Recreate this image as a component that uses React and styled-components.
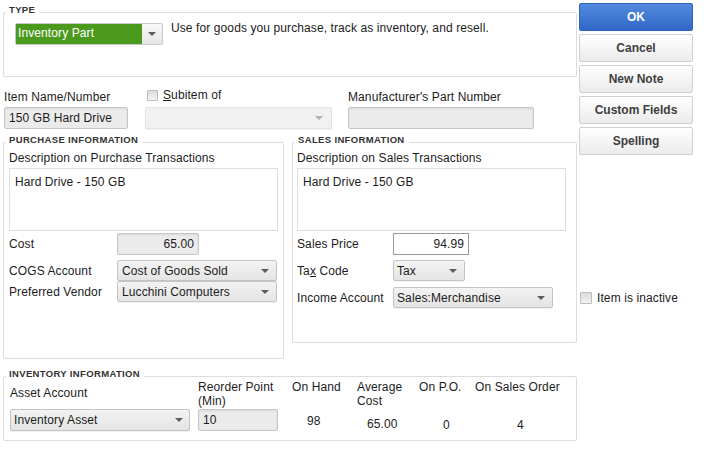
import styled, { createGlobalStyle } from 'styled-components';

const GlobalStyle = createGlobalStyle`
  * {
    box-sizing: border-box;
  }

  body {
    margin: 0;
    background: #ffffff;
    font-family: "Liberation Sans", Arial, sans-serif;
    font-size: 12px;
    line-height: 14px;
    letter-spacing: 0.1px;
    color: #1c1c1c;
  }
`;

// Layout
const Window = styled.div`
  display: flex;
  align-items: flex-start;
  width: 711px;
  height: 459px;
  padding-left: 3px;
  overflow: hidden;
`;

const Main = styled.div`
  display: flex;
  flex-direction: column;
  flex-shrink: 0;
  width: 574px;
`;

const Side = styled.div`
  display: flex;
  flex-direction: column;
  gap: 3px;
  width: 114px;
  margin-left: 2px;
  padding-top: 3px;
`;

// Group boxes
const Group = styled.section`
  position: relative;
  flex-shrink: 0;
  width: ${(p) => p.$w}px;
  height: ${(p) => p.$h}px;
  margin-top: ${(p) => p.$mt || 0}px;
  padding: ${(p) => p.$pad};
  border: 1px solid #dcdcdc;
  border-radius: 2px;
`;

const GroupTitle = styled.span`
  position: absolute;
  top: -8px;
  left: 2px;
  padding: 0 4px 0 3px;
  background: #ffffff;
  font-size: 9.5px;
  line-height: 10px;
  font-weight: bold;
  letter-spacing: 0.35px;
  color: #333333;
`;

// Type
const TypeRow = styled.div`
  display: flex;
  align-items: flex-start;
  gap: 8px;
`;

const TypeSelect = styled.div`
  display: flex;
  width: 148px;
  height: 22px;
  border: 1px solid #c9c9c9;
  border-radius: 2px;
  background: linear-gradient(#f8f8f8, #e6e6e6);
`;

const TypeValue = styled.span`
  flex: 1;
  padding-left: 2px;
  background: #4b9a1d;
  color: #ffffff;
  line-height: 18px;
`;

const TypeArrowBox = styled.span`
  display: flex;
  align-items: center;
  justify-content: center;
  width: 20px;
`;

const TypeHint = styled.span`
  margin-top: -2px;
`;

// Item row
const ItemRow = styled.div`
  display: flex;
  padding: 13px 0 0 1px;
`;

const Field = styled.div`
  display: flex;
  flex-direction: column;
  gap: 3px;
  width: ${(p) => p.$w}px;
  margin-right: ${(p) => p.$mr || 0}px;
`;

const FieldLabel = styled.label`
  display: flex;
  align-items: flex-start;
  gap: 5px;
  height: 14px;
  padding-left: ${(p) => p.$pl || 0}px;
  white-space: nowrap;
`;

const RaisedText = styled.span`
  line-height: 10px;
`;

const Check = styled.span`
  flex-shrink: 0;
  width: ${(p) => p.$size || 11}px;
  height: ${(p) => p.$size || 11}px;
  border: 1px solid #bcbcbc;
  border-radius: 1px;
  background: linear-gradient(#dcdcdc, #f3f3f3);
`;

const TextBox = styled.input`
  display: block;
  width: ${(p) => (p.$w ? `${p.$w}px` : '100%')};
  height: ${(p) => p.$h || 22}px;
  margin: 0;
  padding: 0 4px;
  border: 1px solid #c6c6c6;
  border-radius: 2px;
  background: #ebebeb;
  box-shadow: inset 0 1px 2px rgba(0, 0, 0, 0.08);
  font: inherit;
  letter-spacing: inherit;
  color: #1c1c1c;
  text-align: ${(p) => (p.$right ? 'right' : 'left')};
  outline: none;
`;

const PriceBox = styled(TextBox)`
  border-color: #9a9a9a;
  border-radius: 0;
  background: #ffffff;
  box-shadow: none;
`;

const Combo = styled.div`
  display: flex;
  align-items: center;
  justify-content: space-between;
  flex-shrink: 0;
  width: ${(p) => (p.$w ? `${p.$w}px` : '100%')};
  height: ${(p) => p.$h || 21}px;
  padding: 0 ${(p) => p.$pr ?? 7}px 0 ${(p) => p.$pl ?? 4}px;
  border: 1px solid ${(p) => (p.$disabled ? '#e2e2e2' : '#c4c4c4')};
  border-radius: 2px;
  background: ${(p) =>
    p.$disabled ? '#f1f1f1' : 'linear-gradient(#f3f3f3, #e4e4e4)'};
  box-shadow: 0 1px 1px rgba(0, 0, 0, 0.06);
  white-space: nowrap;
`;

const Arrow = styled.span`
  width: 0;
  height: 0;
  border-left: 4px solid transparent;
  border-right: 4px solid transparent;
  border-top: 4px solid ${(p) => (p.$light ? '#b0b0b0' : '#5c5c5c')};
`;

// Purchase / sales
const InfoRow = styled.div`
  display: flex;
  align-items: flex-start;
  gap: 8px;
  margin-top: 13px;
`;

const Memo = styled.textarea`
  display: block;
  width: 269px;
  height: 63px;
  margin: 3px 0 0;
  padding: 6px 5px;
  border: 1px solid #dedede;
  background: #ffffff;
  resize: none;
  font: inherit;
  letter-spacing: inherit;
  color: inherit;
  outline: none;
  overflow: hidden;
`;

const FormRow = styled.div`
  display: flex;
  align-items: center;
  margin-top: ${(p) => p.$mt || 0}px;
`;

const RowLabel = styled.span`
  flex-shrink: 0;
  width: ${(p) => p.$w}px;
  white-space: nowrap;
`;

// Inventory
const InvGrid = styled.div`
  display: grid;
  grid-template-columns: 188px 94px 65px 62px 56px 1fr;
  grid-template-rows: 28px 22px;
  row-gap: 1px;
`;

const InvHead = styled.div`
  padding-top: ${(p) => p.$pt || 0}px;
  white-space: nowrap;
`;

const InvValue = styled.div`
  padding: ${(p) => p.$pt}px 0 0 ${(p) => p.$pl}px;
`;

// Side buttons
const Button = styled.button`
  width: 114px;
  height: 28px;
  padding: 0;
  border: 1px solid #d0d0d0;
  border-radius: 2px;
  background: linear-gradient(#ffffff, #ebebeb);
  font: bold 12px "Liberation Sans", Arial, sans-serif;
  color: #3e3e3e;
  cursor: pointer;
`;

const PrimaryButton = styled(Button)`
  border-color: #2f62bd;
  background: linear-gradient(#538ade, #3168c8);
  color: #ffffff;
`;

const InactiveRow = styled.label`
  display: flex;
  align-items: center;
  gap: 5px;
  height: 14px;
  margin-top: 133px;
  padding-left: 1px;
`;

export default function App() {
  return (
    <>
      <GlobalStyle />
      <Window>
        <Main>
          <Group $w={574} $h={65} $mt={12} $pad="10px 0 0 11px">
            <GroupTitle>TYPE</GroupTitle>
            <TypeRow>
              <TypeSelect>
                <TypeValue>Inventory Part</TypeValue>
                <TypeArrowBox>
                  <Arrow />
                </TypeArrowBox>
              </TypeSelect>
              <TypeHint>Use for goods you purchase, track as inventory, and resell.</TypeHint>
            </TypeRow>
          </Group>

          <ItemRow>
            <Field $w={124} $mr={17}>
              <FieldLabel>Item Name/Number</FieldLabel>
              <TextBox readOnly value="150 GB Hard Drive" />
            </Field>
            <Field $w={187} $mr={16}>
              <FieldLabel $pl={2}>
                <Check />
                <RaisedText>
                  <u>S</u>ubitem of
                </RaisedText>
              </FieldLabel>
              <Combo $h={22} $pr={8} $disabled>
                <span />
                <Arrow $light />
              </Combo>
            </Field>
            <Field $w={186}>
              <FieldLabel>Manufacturer's Part Number</FieldLabel>
              <TextBox readOnly value="" />
            </Field>
          </ItemRow>

          <InfoRow>
            <Group $w={281} $h={217} $pad="8px 5px 0">
              <GroupTitle>PURCHASE INFORMATION</GroupTitle>
              <div>Description on Purchase Transactions</div>
              <Memo readOnly defaultValue="Hard Drive - 150 GB" />
              <FormRow $mt={2}>
                <RowLabel $w={108}>Cost</RowLabel>
                <TextBox $w={82} $right readOnly value="65.00" />
              </FormRow>
              <FormRow $mt={5}>
                <RowLabel $w={108}>COGS Account</RowLabel>
                <Combo $w={160}>
                  <span>Cost of Goods Sold</span>
                  <Arrow />
                </Combo>
              </FormRow>
              <FormRow>
                <RowLabel $w={108}>Preferred Vendor</RowLabel>
                <Combo $w={160}>
                  <span>Lucchini Computers</span>
                  <Arrow />
                </Combo>
              </FormRow>
            </Group>

            <Group $w={285} $h={201} $pad="8px 4px 0">
              <GroupTitle>SALES INFORMATION</GroupTitle>
              <div>Description on Sales Transactions</div>
              <Memo readOnly defaultValue="Hard Drive - 150 GB" />
              <FormRow $mt={2}>
                <RowLabel $w={96}>Sales Price</RowLabel>
                <PriceBox $w={76} $right readOnly value="94.99" />
              </FormRow>
              <FormRow $mt={5}>
                <RowLabel $w={96}>
                  Ta<u>x</u> Code
                </RowLabel>
                <Combo $w={72} $pl={3}>
                  <span>Tax</span>
                  <Arrow />
                </Combo>
              </FormRow>
              <FormRow $mt={6}>
                <RowLabel $w={96}>Income Account</RowLabel>
                <Combo $w={160} $pl={3}>
                  <span>Sales:Merchandise</span>
                  <Arrow />
                </Combo>
              </FormRow>
            </Group>
          </InfoRow>

          <Group $w={574} $h={65} $mt={17} $pad="3px 0 0 6px">
            <GroupTitle>INVENTORY INFORMATION</GroupTitle>
            <InvGrid>
              <InvHead $pt={6}>Asset Account</InvHead>
              <InvHead>
                Reorder Point
                <br />
                (Min)
              </InvHead>
              <InvHead>On Hand</InvHead>
              <InvHead>
                Average
                <br />
                Cost
              </InvHead>
              <InvHead>On P.O.</InvHead>
              <InvHead>On Sales Order</InvHead>

              <Combo $w={180} $h={22} $pl={3} $pr={6}>
                <span>Inventory Asset</span>
                <Arrow />
              </Combo>
              <TextBox $w={80} readOnly value="10" />
              <InvValue $pt={5} $pl={15}>98</InvValue>
              <InvValue $pt={8} $pl={10}>65.00</InvValue>
              <InvValue $pt={9} $pl={24}>0</InvValue>
              <InvValue $pt={9} $pl={42}>4</InvValue>
            </InvGrid>
          </Group>
        </Main>

        <Side>
          <PrimaryButton>OK</PrimaryButton>
          <Button>Cancel</Button>
          <Button>New Note</Button>
          <Button>Custom Fields</Button>
          <Button>
            Spellin<u>g</u>
          </Button>
          <InactiveRow>
            <Check $size={12} />
            <span>Item is inactive</span>
          </InactiveRow>
        </Side>
      </Window>
    </>
  );
}
